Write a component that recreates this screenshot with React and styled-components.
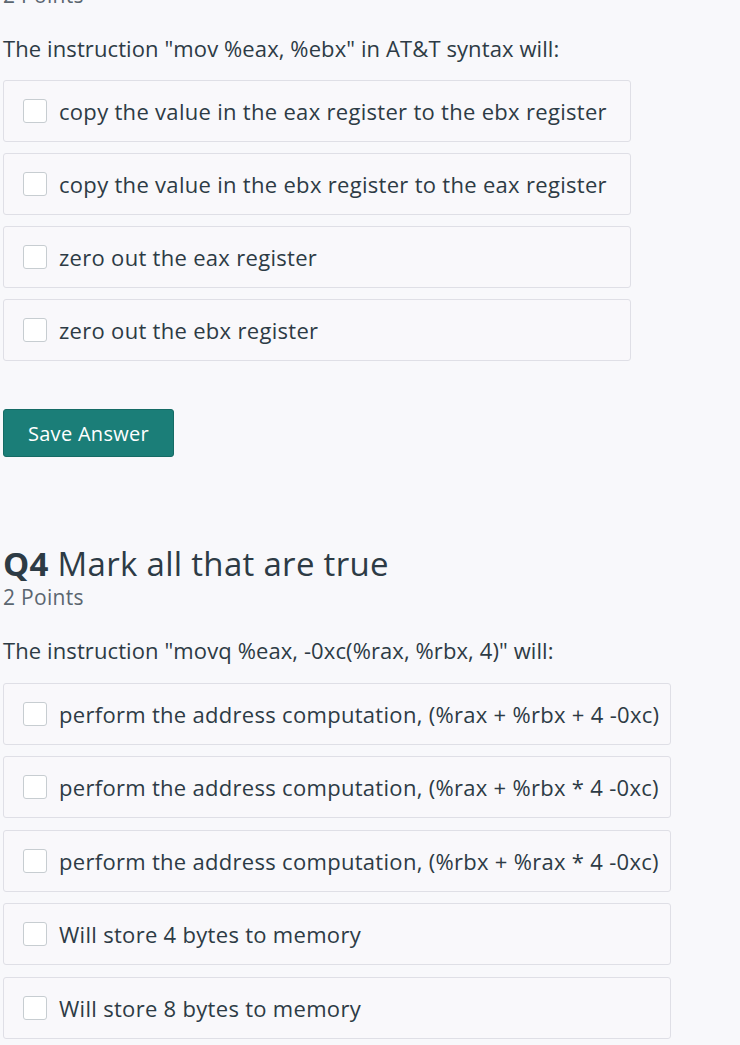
import React from 'react'
import styled, { createGlobalStyle } from 'styled-components'

const GlobalStyle = createGlobalStyle`
  html, body {
    margin: 0;
    padding: 0;
    background: #f8f8fb;
  }
  body {
    font-family: "Open Sans", Lato, sans-serif;
    color: #2d3b45;
    overflow: hidden;
  }
`

const q3 = {
    prompt: 'The instruction "mov %eax, %ebx" in AT&T syntax will:',
    options: [
        'copy the value in the eax register to the ebx register',
        'copy the value in the ebx register to the eax register',
        'zero out the eax register',
        'zero out the ebx register',
    ],
}

const q4 = {
    prompt: 'The instruction "movq %eax, -0xc(%rax, %rbx, 4)" will:',
    options: [
        'perform the address computation, (%rax + %rbx + 4 -0xc)',
        'perform the address computation, (%rax + %rbx * 4 -0xc)',
        'perform the address computation, (%rbx + %rax * 4 -0xc)',
        'Will store 4 bytes to memory',
        'Will store 8 bytes to memory',
    ],
}

function Question({ data, width, gap }) {
    return (
        <QuestionStyled $gap={gap}>
            <Prompt>{data.prompt}</Prompt>
            {data.options.map((opt) => (
                <Option key={opt} $width={width}>
                    <Box />
                    <span>{opt}</span>
                </Option>
            ))}
        </QuestionStyled>
    )
}

function App() {
    return (
        <>
            <GlobalStyle />
            <Page>
                <Points $cut>2 Points</Points>
                <Question data={q3} width={628} gap={11} />
                <SaveButton>Save Answer</SaveButton>
                <Heading>
                    <b>Q4</b> Mark all that are true
                </Heading>
                <Points>2 Points</Points>
                <Question data={q4} width={668} gap={11.5} />
            </Page>
        </>
    )
}

export default App

const Page = styled.div`
    padding-left: 3px;
    display: flex;
    flex-direction: column;
    align-items: flex-start;
    letter-spacing: 0.3px;
`

const Points = styled.div`
    font-size: 21px;
    line-height: 24px;
    color: #5b6670;
    margin-top: ${(p) => (p.$cut ? '-17px' : '0')};
`

const QuestionStyled = styled.div`
    display: flex;
    flex-direction: column;
    gap: ${(p) => p.$gap}px;
`

const Prompt = styled.div`
    font-size: 22px;
    line-height: 24px;
    letter-spacing: 0.1px;
    margin: 29px 0 9px;
`

const Option = styled.label`
    box-sizing: border-box;
    width: ${(p) => p.$width}px;
    height: 62px;
    border: 1px solid #dfdfe6;
    border-radius: 3px;
    background: #f9f8fb;
    display: flex;
    align-items: center;
    gap: 12px;
    padding-left: 19px;
    font-size: 22px;
`

const Box = styled.span`
    box-sizing: border-box;
    width: 24px;
    height: 24px;
    border: 1px solid #c7cdd1;
    border-radius: 3px;
    background: #fff;
    flex-shrink: 0;
`

const SaveButton = styled.button`
    margin-top: 48px;
    width: 171px;
    height: 48px;
    border: 1px solid #156b65;
    border-radius: 3px;
    background: #1b7e78;
    color: #fff;
    font-family: "Open Sans", Lato, sans-serif;
    font-size: 20px;
    letter-spacing: 0.3px;
`

const Heading = styled.h2`
    margin: 86px 0 0;
    font-size: 33px;
    line-height: 42px;
    font-weight: 400;
    color: #2d3b45;
    b {
        font-weight: 700;
    }
`
